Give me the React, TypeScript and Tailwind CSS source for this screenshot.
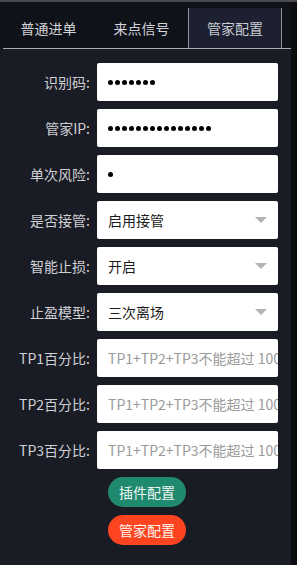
import React from "react";

const font = { fontFamily: '"Noto Sans CJK SC", "Noto Sans", sans-serif' };

function Dots({ n }: { n: number }) {
  return (
    <div className="flex items-center gap-[2px]">
      {Array.from({ length: n }).map((_, i) => (
        <span key={i} className="block w-[5px] h-[5px] rounded-full bg-black" />
      ))}
    </div>
  );
}

function Row({ label, children }: { label: string; children: React.ReactNode }) {
  return (
    <div className="flex items-center h-[38px]">
      <div className="w-[91px] text-right text-[14px] text-[#cfd0d4] leading-none pr-[1px]">{label}</div>
      <div className="ml-[6px] w-[181px] h-[38px] bg-white rounded-[2px] flex items-center pl-[11px] pr-[11px] overflow-hidden">
        {children}
      </div>
    </div>
  );
}

function Select({ value }: { value: string }) {
  return (
    <div className="flex items-center justify-between w-full">
      <span className="text-[14px] text-[#1a1a1a] leading-none">{value}</span>
      <svg width="12" height="6" viewBox="0 0 12 6" className="mr-[0px]">
        <polygon points="0,0 12,0 6,6" fill="#b4b4b4" />
      </svg>
    </div>
  );
}

function Placeholder() {
  return (
    <span className="text-[14px] text-[#9a9a9a] leading-none whitespace-nowrap">TP1+TP2+TP3不能超过 100%</span>
  );
}

export default function App() {
  return (
    <div className="w-[297px] h-[565px] bg-[#0d0e13] flex flex-col overflow-hidden" style={font}>
      <div className="h-[2px] bg-[#4a4a4c]" />
      <div className="flex flex-1">
        <div className="w-[291px] flex flex-col">
          <div className="bg-[#10121a] h-[46px] flex items-end pl-[2px]">
            <div className="w-[93px] h-[40px] flex items-center justify-center text-[14px] text-[#d2d3d7]">普通进单</div>
            <div className="w-[93px] h-[40px] flex items-center justify-center text-[14px] text-[#d2d3d7]">来点信号</div>
            <div className="w-[94px] h-[40px] flex items-center justify-center text-[14px] text-[#c9cbd1] bg-[#1c2030] border-l border-r border-[#8e9096]">管家配置</div>
          </div>
          <div className="bg-[#10121a]">
            <div className="h-[1px] ml-[3px] bg-[#a9abb0]" />
          </div>
          <div className="flex-1 bg-[#1a1c25] pt-[14px] flex flex-col gap-[8px]">
            <Row label="识别码:"><Dots n={7} /></Row>
            <Row label="管家IP:"><Dots n={15} /></Row>
            <Row label="单次风险:"><Dots n={1} /></Row>
            <Row label="是否接管:"><Select value="启用接管" /></Row>
            <Row label="智能止损:"><Select value="开启" /></Row>
            <Row label="止盈模型:"><Select value="三次离场" /></Row>
            <Row label="TP1百分比:"><Placeholder /></Row>
            <Row label="TP2百分比:"><Placeholder /></Row>
            <Row label="TP3百分比:"><Placeholder /></Row>
            <div className="flex flex-col items-start gap-[8px] pl-[108px]">
              <button className="w-[78px] h-[30px] rounded-full bg-[#1f8a70] text-[14px] text-[#eef5f2] leading-none">插件配置</button>
              <button className="w-[78px] h-[30px] rounded-full bg-[#fc4520] text-[14px] text-[#fff3ee] leading-none">管家配置</button>
            </div>
          </div>
        </div>
        <div className="flex-1 bg-[#0c0d11]" />
      </div>
    </div>
  );
}
